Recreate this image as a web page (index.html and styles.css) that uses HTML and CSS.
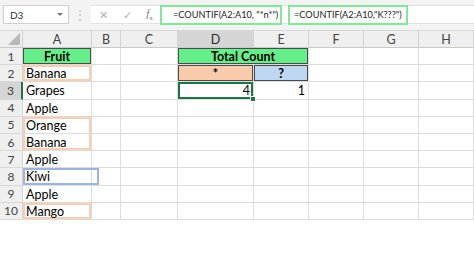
FILE: index.html
```html
<!DOCTYPE html>
<html lang="en">
<head>
    <meta charset="UTF-8">
    <title>COUNTIF wildcards</title>
    <link rel="stylesheet" href="styles.css">
</head>
<body>

    <!-- Name box + formula bar -->
    <div class="toolbar">
        <div class="name-box">
            <span>D3</span>
            <span class="caret"></span>
        </div>
        <div class="grip">&#8942;</div>
        <div class="formula-bar">
            <span class="fx-btn">&#10005;</span>
            <span class="fx-btn">&#10003;</span>
            <span class="fx-btn fx"><i>f</i><sub>x</sub></span>
            <span class="formula first">=COUNTIF(A2:A10, "*n*")</span>
            <span class="formula second">=COUNTIF(A2:A10,"K???")</span>
        </div>
    </div>

    <!-- Sheet -->
    <div class="sheet">
        <div class="corner">
            <svg width="12" height="12" viewBox="0 0 12 12"><polygon points="0,12 12,12 12,0" fill="#b8b8b8"/></svg>
        </div>
        <div class="hdr">A</div>
        <div class="hdr">B</div>
        <div class="hdr">C</div>
        <div class="hdr active">D</div>
        <div class="hdr">E</div>
        <div class="hdr">F</div>
        <div class="hdr">G</div>
        <div class="hdr">H</div>

        <div class="rn">1</div>
        <div class="cell green center bold">Fruit</div>
        <div class="cell"></div>
        <div class="cell"></div>
        <div class="cell green center bold wide">Total Count</div>
        <div class="cell"></div>
        <div class="cell"></div>
        <div class="cell"></div>

        <div class="rn">2</div>
        <div class="cell ref-box">Banana</div>
        <div class="cell"></div>
        <div class="cell"></div>
        <div class="cell peach center bold">*</div>
        <div class="cell blue center bold">?</div>
        <div class="cell"></div>
        <div class="cell"></div>
        <div class="cell"></div>

        <div class="rn active">3</div>
        <div class="cell">Grapes</div>
        <div class="cell"></div>
        <div class="cell"></div>
        <div class="cell num current">4</div>
        <div class="cell num">1</div>
        <div class="cell"></div>
        <div class="cell"></div>
        <div class="cell"></div>

        <div class="rn">4</div>
        <div class="cell">Apple</div>
        <div class="cell"></div>
        <div class="cell"></div>
        <div class="cell"></div>
        <div class="cell"></div>
        <div class="cell"></div>
        <div class="cell"></div>
        <div class="cell"></div>

        <div class="rn">5</div>
        <div class="cell ref-top">Orange</div>
        <div class="cell"></div>
        <div class="cell"></div>
        <div class="cell"></div>
        <div class="cell"></div>
        <div class="cell"></div>
        <div class="cell"></div>
        <div class="cell"></div>

        <div class="rn">6</div>
        <div class="cell ref-bottom">Banana</div>
        <div class="cell"></div>
        <div class="cell"></div>
        <div class="cell"></div>
        <div class="cell"></div>
        <div class="cell"></div>
        <div class="cell"></div>
        <div class="cell"></div>

        <div class="rn">7</div>
        <div class="cell">Apple</div>
        <div class="cell"></div>
        <div class="cell"></div>
        <div class="cell"></div>
        <div class="cell"></div>
        <div class="cell"></div>
        <div class="cell"></div>
        <div class="cell"></div>

        <div class="rn">8</div>
        <div class="cell kiwi">Kiwi</div>
        <div class="cell"></div>
        <div class="cell"></div>
        <div class="cell"></div>
        <div class="cell"></div>
        <div class="cell"></div>
        <div class="cell"></div>
        <div class="cell"></div>

        <div class="rn">9</div>
        <div class="cell">Apple</div>
        <div class="cell"></div>
        <div class="cell"></div>
        <div class="cell"></div>
        <div class="cell"></div>
        <div class="cell"></div>
        <div class="cell"></div>
        <div class="cell"></div>

        <div class="rn">10</div>
        <div class="cell ref-box">Mango</div>
        <div class="cell"></div>
        <div class="cell"></div>
        <div class="cell"></div>
        <div class="cell"></div>
        <div class="cell"></div>
        <div class="cell"></div>
        <div class="cell"></div>
    </div>

</body>
</html>
```

FILE: styles.css
```css
/* Page */
body {
    margin: 0;
    background: #ffffff;
    font-family: Lato, "Liberation Sans", sans-serif;
    color: #000;
}

/* Toolbar */
.toolbar {
    display: flex;
    align-items: flex-start;
    height: 30px;
    padding-top: 5px;
    box-sizing: border-box;
    background: #f3f3f3;
}

.name-box {
    display: flex;
    align-items: center;
    justify-content: space-between;
    width: 66px;
    height: 19px;
    margin-left: 3px;
    padding: 0 5px 0 6px;
    box-sizing: border-box;
    background: #fff;
    border: 1px solid #cfcfcf;
    font-size: 10px;
    color: #333;
}

.caret {
    width: 0;
    height: 0;
    border-left: 3px solid transparent;
    border-right: 3px solid transparent;
    border-top: 3px solid #777;
}

.grip {
    width: 22px;
    text-align: center;
    font-size: 12px;
    line-height: 19px;
    color: #c4c4c4;
}

.formula-bar {
    flex: 1;
    display: flex;
    align-items: center;
    height: 19px;
    background: #fff;
    border-top: 1px solid #e2e2e2;
    border-bottom: 1px solid #e2e2e2;
    box-sizing: border-box;
}

.fx-btn {
    width: 24px;
    text-align: center;
    font-size: 11px;
    color: #b0b0b0;
}

.fx-btn.fx {
    width: 21px;
    font-family: "Liberation Serif", serif;
    font-size: 11px;
    color: #777;
}

.fx-btn sub {
    font-size: 7px;
}

.formula {
    display: flex;
    align-items: center;
    height: 20px;
    box-sizing: border-box;
    border: 2px solid #84e59d;
    font-size: 9.2px;
    color: #222;
    white-space: nowrap;
}

.formula.first {
    width: 122px;
    padding-left: 11px;
}

.formula.second {
    width: 120px;
    margin-left: 6px;
    padding-left: 4px;
}

/* Sheet grid */
.sheet {
    display: grid;
    grid-template-columns: 23px 69px 29px 57px 76px 55px 55px 55px 55px;
    grid-template-rows: 17px repeat(10, 17.2px);
    border-top: 1px solid #d6d6d6;
}

.corner,
.hdr {
    display: flex;
    align-items: center;
    justify-content: center;
    background: #efefef;
    border-right: 1px solid #d3d3d3;
    border-bottom: 1px solid #c9c9c9;
    box-sizing: border-box;
    font-size: 12.5px;
    color: #444;
}

.corner {
    justify-content: flex-end;
    align-items: flex-end;
    padding: 0 2px 2px 0;
}

.hdr.active {
    background: #d5d5d5;
    color: #2b2b2b;
}

.rn {
    display: flex;
    align-items: center;
    justify-content: center;
    background: #efefef;
    border-right: 1px solid #d3d3d3;
    border-bottom: 1px solid #d9d9d9;
    box-sizing: border-box;
    font-size: 12px;
    color: #444;
}

.rn.active {
    background: #d5d5d5;
    border-right: 2px solid #217346;
}

.cell {
    position: relative;
    display: flex;
    align-items: center;
    padding: 1px 3px 0;
    border-right: 1px solid #dcdcdc;
    border-bottom: 1px solid #dcdcdc;
    box-sizing: border-box;
    font-size: 12.5px;
    white-space: nowrap;
}

.center { justify-content: center; }
.bold { font-weight: bold; }
.num { justify-content: flex-end; }
.wide { grid-column: span 2; }

.green {
    background: #66ee8a;
    box-shadow: inset 0 0 0 1px #4a4a4a;
}

.peach {
    background: #f8cbad;
    box-shadow: inset 0 0 0 1px #4a4a4a;
}

.blue {
    background: #bdd7ee;
    box-shadow: inset 0 0 0 1px #4a4a4a;
}

/* Formula reference outlines */
.ref-box {
    box-shadow: inset 0 0 0 2px #f8cfb2;
}

.ref-top {
    box-shadow: inset 0 2px 0 #f8cfb2, inset 2px 0 0 #f8cfb2, inset -2px 0 0 #f8cfb2;
}

.ref-bottom {
    box-shadow: inset 0 -2px 0 #f8cfb2, inset 2px 0 0 #f8cfb2, inset -2px 0 0 #f8cfb2;
}

.kiwi::after {
    content: "";
    position: absolute;
    left: 0;
    top: 0;
    width: 76px;
    height: 100%;
    border: 2px solid #9db4e0;
    box-sizing: border-box;
    z-index: 2;
}

/* Active cell */
.current {
    box-shadow: inset 0 0 0 2px #217346;
}

.current::after {
    content: "";
    position: absolute;
    right: -3px;
    bottom: -3px;
    width: 4px;
    height: 4px;
    background: #217346;
    border: 1px solid #fff;
    z-index: 3;
}
```
